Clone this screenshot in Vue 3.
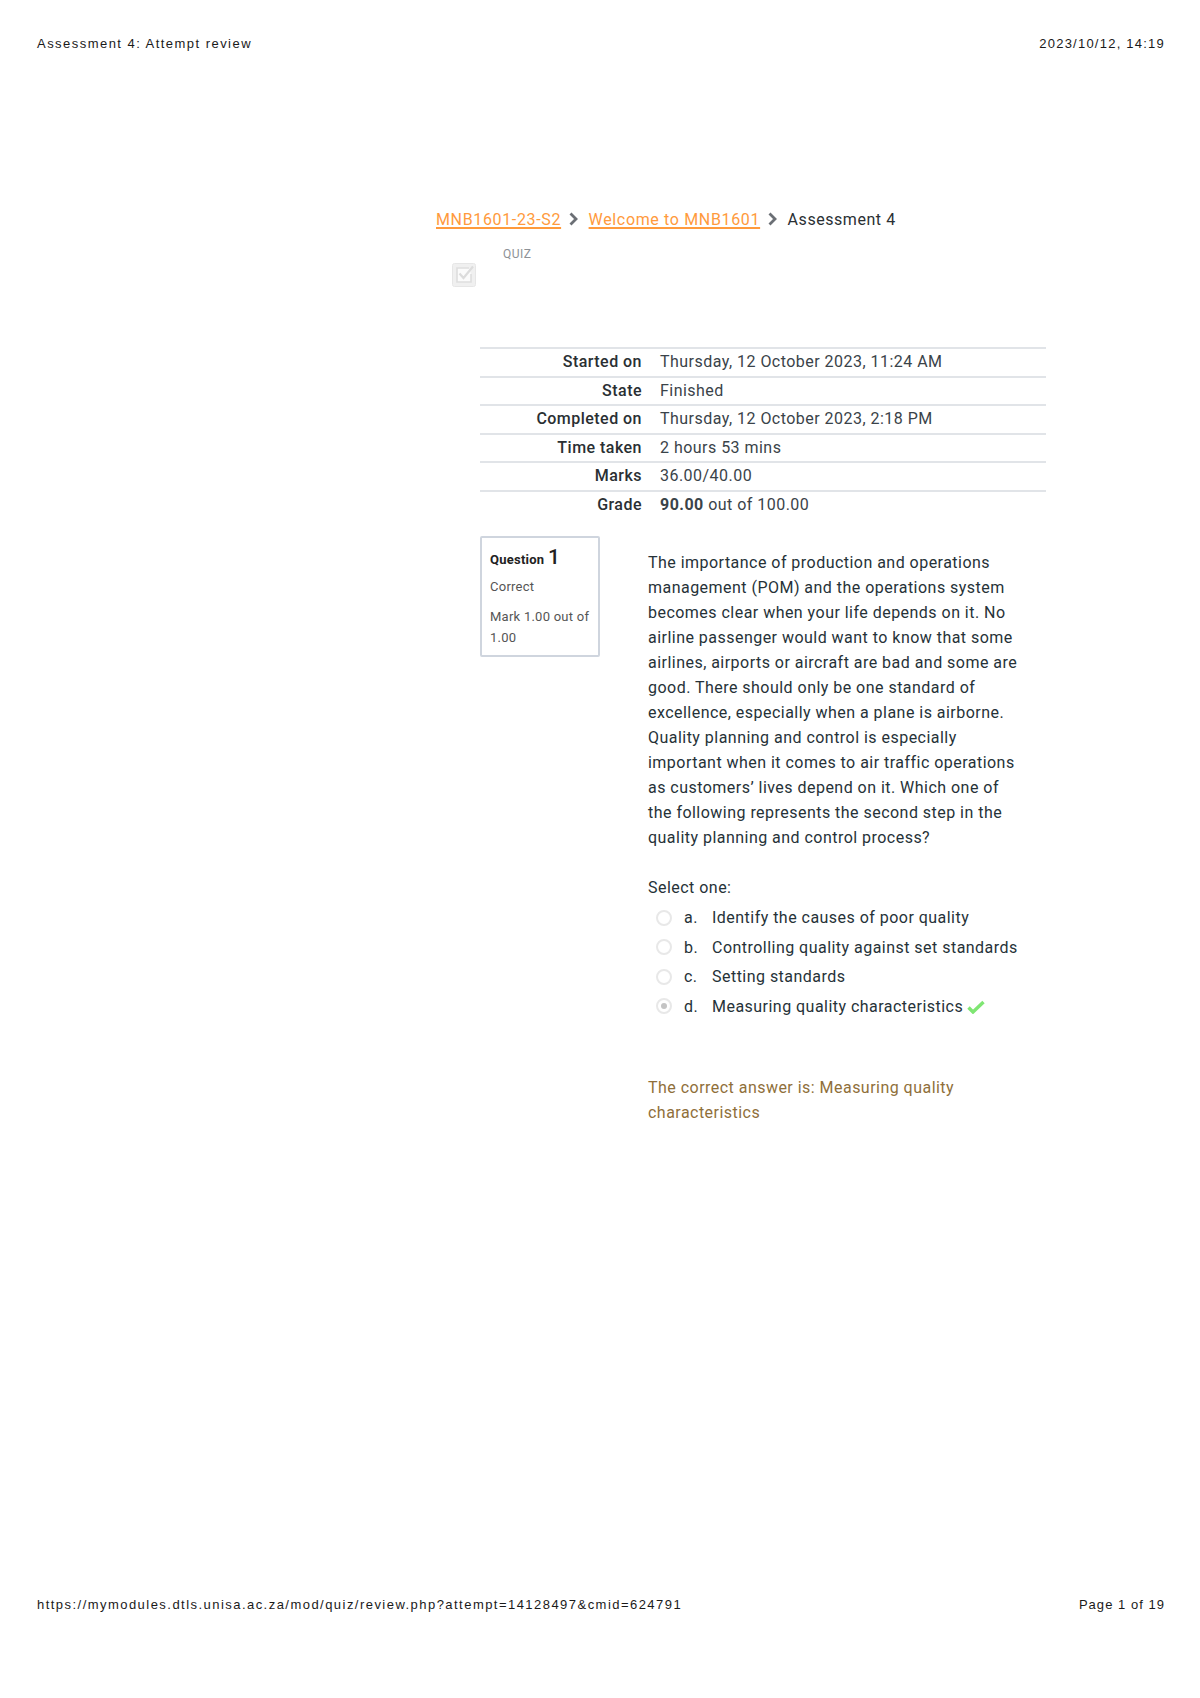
<script setup>
const rows = [
  ['Started on', 'Thursday, 12 October 2023, 11:24 AM'],
  ['State', 'Finished'],
  ['Completed on', 'Thursday, 12 October 2023, 2:18 PM'],
  ['Time taken', '2 hours 53 mins'],
  ['Marks', '36.00/40.00'],
]
const options = [
  ['a.', 'Identify the causes of poor quality', false],
  ['b.', 'Controlling quality against set standards', false],
  ['c.', 'Setting standards', false],
  ['d.', 'Measuring quality characteristics', true],
]
</script>

<template>
  <div class="page">
    <header class="print-bar">
      <span>Assessment 4: Attempt review</span>
      <span class="date">2023/10/12, 14:19</span>
    </header>

    <main class="content">
      <nav class="crumbs">
        <a href="#">MNB1601-23-S2</a>
        <svg class="chev" viewBox="0 0 10 14"><path d="M1.5 1.5l5.5 5.5-5.5 5.5" fill="none" stroke="#6b6f75" stroke-width="2.8" /></svg>
        <a href="#">Welcome to MNB1601</a>
        <svg class="chev" viewBox="0 0 10 14"><path d="M1.5 1.5l5.5 5.5-5.5 5.5" fill="none" stroke="#6b6f75" stroke-width="2.8" /></svg>
        <span class="here">Assessment 4</span>
      </nav>

      <div class="activity">
        <svg class="quiz-icon" viewBox="0 0 24 24">
          <rect x="0.5" y="0.5" width="23" height="23" rx="2" fill="#f0f0f0" stroke="#e6e6e6" />
          <path d="M17 5H5v14h14v-8" fill="#fbfbfb" stroke="#dedede" stroke-width="1.6" />
          <path d="M7.5 10.5l4 4.5L21 3.5" fill="none" stroke="#dcdcdc" stroke-width="2.2" />
        </svg>
        <span class="quiz-label">QUIZ</span>
      </div>

      <table class="summary">
        <tbody>
          <tr v-for="r in rows" :key="r[0]">
            <th>{{ r[0] }}</th>
            <td>{{ r[1] }}</td>
          </tr>
          <tr>
            <th>Grade</th>
            <td><b>90.00</b> out of 100.00</td>
          </tr>
        </tbody>
      </table>

      <section class="question">
        <aside class="info">
          <div class="qno">Question <span>1</span></div>
          <div class="state">Correct</div>
          <div class="grade">Mark 1.00 out of 1.00</div>
        </aside>
        <div class="body">
          <p class="qtext">The importance of production and operations<br>management (POM) and the operations system<br>becomes clear when your life depends on it. No<br>airline passenger would want to know that some<br>airlines, airports or aircraft are bad and some are<br>good. There should only be one standard of<br>excellence, especially when a plane is airborne.<br>Quality planning and control is especially<br>important when it comes to air traffic operations<br>as customers’ lives depend on it. Which one of<br>the following represents the second step in the<br>quality planning and control process?</p>
          <div class="prompt">Select one:</div>
          <ul class="answers">
            <li v-for="o in options" :key="o[0]">
              <span class="radio" :class="{ on: o[2] }"></span>
              <span class="letter">{{ o[0] }}</span>
              <span>{{ o[1] }}</span>
              <svg v-if="o[2]" class="tick" viewBox="0 0 18 14"><path d="M1.5 7.5l4.5 4.5L16.5 2" fill="none" stroke="#7fe673" stroke-width="3.4" /></svg>
            </li>
          </ul>
          <p class="feedback">The correct answer is: Measuring quality<br>characteristics</p>
        </div>
      </section>
    </main>

    <footer class="print-bar foot">
      <span>https://mymodules.dtls.unisa.ac.za/mod/quiz/review.php?attempt=14128497&amp;cmid=624791</span>
      <span class="pageno">Page 1 of 19</span>
    </footer>
  </div>
</template>

<style>
html, body { margin: 0; background: #fff; }
</style>

<style scoped>
.page {
  width: 1200px;
  height: 1698px;
  display: flex;
  flex-direction: column;
  box-sizing: border-box;
  padding: 36px 35px 85px 37px;
  font-family: Roboto, sans-serif;
  color: #263238;
  overflow: hidden;
}
.print-bar {
  display: flex;
  justify-content: space-between;
  font-family: "Liberation Sans", sans-serif;
  font-size: 13px;
  line-height: 16px;
  letter-spacing: 1.46px;
  color: #1a1a1a;
}
.print-bar .date { letter-spacing: 1.23px; }
.print-bar .pageno { letter-spacing: 1.03px; }
.foot { margin-top: auto; }
.content {
  margin: 156px 0 0 399px;
  width: 640px;
  font-size: 16px;
  letter-spacing: 0.47px;
}
.crumbs {
  display: flex;
  align-items: center;
  height: 22px;
  color: #2a2f33;
  letter-spacing: 0.65px;
}
.crumbs a {
  color: #ff9a3c;
  text-decoration: underline;
  text-decoration-thickness: 1.5px;
  text-underline-offset: 2px;
}
.crumbs .here { letter-spacing: 0.55px; }
.chev { width: 10px; height: 14px; margin: 0 9.5px 0 8px; }
.activity {
  display: flex;
  margin: 17px 0 0 16px;
  height: 100px;
}
.quiz-icon { width: 24px; height: 24px; margin-top: 16px; }
.quiz-label {
  margin-left: 27px;
  font-size: 12px;
  line-height: 14px;
  letter-spacing: 0.5px;
  color: #8d9196;
}
.summary {
  margin: 0 0 0 44px;
  width: 566px;
  border-collapse: collapse;
}
.summary tr { border-top: 2px solid #e1e4e8; height: 28.5px; }
.summary th, .summary td { padding: 0; line-height: 24px; }
.summary th { width: 162px; text-align: right; font-weight: 500; color: #2a2f33; }
.summary td { padding-left: 18px; color: #3a4349; }
.summary b { font-weight: 700; }
.question {
  display: flex;
  margin: 17px 0 0 44px;
}
.info {
  box-sizing: border-box;
  width: 120px;
  height: 121px;
  padding: 6px 8px;
  border: 2px solid #cfd5de;
  border-radius: 2px;
  font-size: 13px;
  color: #555;
  letter-spacing: 0.25px;
}
.qno { font-size: 13px; font-weight: 700; color: #222; line-height: 26px; }
.qno span { font-size: 21px; font-weight: 500; }
.state { margin-top: 4px; line-height: 20px; }
.grade { margin-top: 10px; line-height: 20.5px; }
.body { margin-left: 48px; width: 400px; padding-top: 14px; }
.qtext { margin: 0; line-height: 25px; }
.prompt { margin-top: 26px; line-height: 24px; }
.answers { list-style: none; margin: 3px 0 0; padding: 0; }
.answers li { display: flex; align-items: center; height: 29.5px; }
.radio {
  box-sizing: border-box;
  width: 16px;
  height: 16px;
  margin-left: 8px;
  border: 2px solid #e8e8e8;
  border-radius: 50%;
  display: flex;
  align-items: center;
  justify-content: center;
}
.radio.on::after {
  content: "";
  width: 6px;
  height: 6px;
  border-radius: 50%;
  background: #c4c4c4;
}
.letter { width: 28px; margin-left: 12px; }
.tick { width: 18px; height: 14px; margin-left: 4px; margin-top: 2px; }
.feedback { margin: 54px 0 0; line-height: 25px; color: #8f6f3a; }
</style>
